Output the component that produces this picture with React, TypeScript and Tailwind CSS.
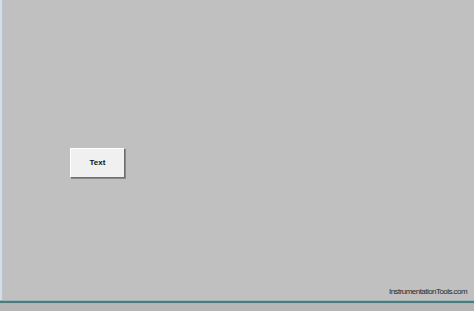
export default function App() {
  return (
    <div className="w-[474px] h-[311px] bg-[#c0c0c0] flex flex-col overflow-hidden font-['Liberation_Sans',sans-serif]">
      <div className="flex flex-1">
        <div className="w-[3px] flex">
          <div className="w-[2px] bg-[#d8dde3]" />
          <div className="w-[1px] bg-[#b8c4d0]" />
        </div>
        <div className="flex-1 flex flex-col">
          <div className="h-[148px]" />
          <div className="pl-[67px]">
            <button className="w-[55px] h-[30px] bg-[#f0f0f0] border border-t-white border-l-white border-r-[#6e6e6e] border-b-[#6e6e6e] shadow-[1px_1px_0_#8a8a8a] text-[8px] font-bold text-[#111] flex items-center justify-center">
              Text
            </button>
          </div>
          <div className="flex-1" />
          <div className="flex justify-end pr-[7px] pb-[2px]">
            <span className="text-[8px] text-[#2a2a2a] tracking-[-0.55px]">InstrumentationTools.com</span>
          </div>
        </div>
      </div>
      <div className="h-[1px] bg-[#9fb3b5]" />
      <div className="h-[2px] bg-[#4b7c80]" />
      <div className="h-[1px] bg-[#a8b8b8]" />
      <div className="h-[7px] bg-[#b6b6b6]" />
    </div>
  );
}
